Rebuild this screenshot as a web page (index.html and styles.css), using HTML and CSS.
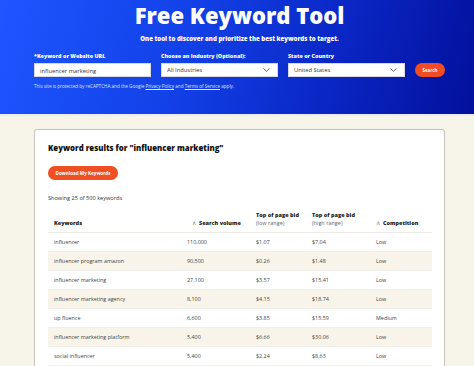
FILE: index.html
```html
<!DOCTYPE html>
<html lang="en">
<head>
  <meta charset="UTF-8" />
  <title>Free Keyword Tool</title>
  <link rel="stylesheet" href="styles.css">
</head>
<body>
  <header class="hero">
    <h1>Free Keyword Tool</h1>
    <p class="tagline">One tool to discover and prioritize the best keywords to target.</p>
    <div class="search-form">
      <div class="field">
        <label>*Keyword or Website URL</label>
        <div class="box">influencer marketing</div>
      </div>
      <div class="field">
        <label>Choose an Industry (Optional):</label>
        <div class="box select">All Industries
          <svg class="chev" width="7" height="4" viewBox="0 0 7 4"><path d="M0.5 0.5 L3.5 3.3 L6.5 0.5" fill="none" stroke="#555" stroke-width="0.9"/></svg>
        </div>
      </div>
      <div class="field">
        <label>State or Country</label>
        <div class="box select">United States
          <svg class="chev" width="7" height="4" viewBox="0 0 7 4"><path d="M0.5 0.5 L3.5 3.3 L6.5 0.5" fill="none" stroke="#555" stroke-width="0.9"/></svg>
        </div>
      </div>
      <button class="search-btn">Search</button>
    </div>
    <p class="disclaimer">This site is protected by reCAPTCHA and the Google <u>Privacy Policy</u> and <u>Terms of Service</u> apply.</p>
  </header>

  <main class="page">
    <section class="results">
      <h2>Keyword results for "influencer marketing"</h2>
      <button class="download-btn">Download My Keywords</button>
      <p class="count">Showing 25 of 500 keywords</p>
      <table class="kw-table">
        <thead>
          <tr>
            <th class="c-kw">Keywords</th>
            <th class="c-vol"><span class="sort indent">&#8743;</span>Search volume</th>
            <th class="c-low">Top of page bid<br><span class="sub">(low range)</span></th>
            <th class="c-high">Top of page bid<br><span class="sub">(high range)</span></th>
            <th class="c-comp"><span class="sort">&#8743;</span>Competition</th>
          </tr>
        </thead>
        <tbody>
          <tr><td>influencer</td><td>110,000</td><td>$1.07</td><td>$7.04</td><td>Low</td></tr>
          <tr><td>influencer program amazon</td><td>90,500</td><td>$0.26</td><td>$1.48</td><td>Low</td></tr>
          <tr><td>influencer marketing</td><td>27,100</td><td>$3.57</td><td>$15.41</td><td>Low</td></tr>
          <tr><td>influencer marketing agency</td><td>8,100</td><td>$4.15</td><td>$18.74</td><td>Low</td></tr>
          <tr><td>up fluence</td><td>6,600</td><td>$3.85</td><td>$15.59</td><td>Medium</td></tr>
          <tr><td>influencer marketing platform</td><td>5,400</td><td>$6.66</td><td>$30.06</td><td>Low</td></tr>
          <tr><td>social influencer</td><td>5,400</td><td>$2.24</td><td>$8.63</td><td>Low</td></tr>
        </tbody>
      </table>
    </section>
  </main>
</body>
</html>
```

FILE: styles.css
```css
html, body {
  height: 366px;
  overflow: hidden;
}
body {
  margin: 0;
  font-family: "Open Sans", Arial, sans-serif;
  background: #f7f4ea;
}
.hero {
  height: 116px;
  box-sizing: border-box;
  padding: 1px 0 0 34px;
  background: linear-gradient(105deg, #1e56ff 0%, #1240e6 40%, #0a26c4 70%, #03109c 100%);
  border-bottom: 2px solid #e9ebf5;
  color: #fff;
}
.hero h1 {
  margin: 0;
  width: 411px;
  text-align: center;
  font-size: 22px;
  line-height: 28px;
  font-weight: 800;
}
.tagline {
  margin: 5px 0 0;
  width: 411px;
  text-align: center;
  font-size: 6.1px;
  line-height: 10px;
  font-weight: 800;
}
.search-form {
  display: flex;
  align-items: flex-end;
  gap: 10px;
  width: 411px;
  margin-top: 8px;
}
.field {
  width: 117px;
  display: flex;
  flex-direction: column;
  gap: 3px;
}
.field label {
  font-size: 5.4px;
  line-height: 8px;
  font-weight: 800;
}
.box {
  height: 14px;
  background: #fff;
  color: #333;
  font-size: 5.8px;
  line-height: 14px;
  padding: 0 5px;
  box-sizing: border-box;
  border: 1px solid #d8d8e0;
}
.select {
  display: flex;
  justify-content: space-between;
  align-items: center;
}
.chev {
  margin-right: 2px;
}
.search-btn {
  width: 30px;
  height: 14px;
  padding: 0;
  border: none;
  border-radius: 7px;
  background: #f24c25;
  color: #fff;
  font-family: inherit;
  font-size: 4.4px;
  font-weight: 700;
}
.disclaimer {
  margin: 5px 0 0;
  font-size: 4.6px;
  line-height: 8px;
  color: #dfe4ff;
}
.disclaimer u {
  text-decoration-thickness: 0.5px;
}
.page {
  padding: 13px 0 0 34px;
}
.results {
  width: 411px;
  height: 260px;
  box-sizing: border-box;
  background: #fff;
  border: 1px solid #c9c6bb;
  border-radius: 3px;
  box-shadow: 0 0 1px rgba(0, 0, 0, 0.15);
  padding: 12px 12px 0 13px;
}
.results h2 {
  margin: 0;
  font-size: 7.8px;
  line-height: 12px;
  font-weight: 800;
  color: #111;
}
.download-btn {
  display: block;
  margin-top: 12px;
  width: 70px;
  height: 14px;
  padding: 0;
  border: none;
  border-radius: 7px;
  background: #f04e23;
  color: #fff;
  font-family: inherit;
  font-size: 4.6px;
  font-weight: 700;
}
.count {
  margin: 14px 0 0;
  font-size: 5.6px;
  line-height: 8px;
  color: #333;
}
.kw-table {
  margin-top: 4px;
  width: 384px;
  table-layout: fixed;
  border-collapse: collapse;
  font-size: 5.4px;
  color: #444;
}
.kw-table th {
  text-align: left;
  font-weight: 800;
  color: #222;
  font-size: 5.5px;
  line-height: 8px;
  padding: 5px 0 5px 0;
  vertical-align: bottom;
  border-bottom: 1px solid #eeece6;
}
.kw-table th.c-kw { padding-left: 6px; }
.kw-table .sub {
  font-weight: 400;
  color: #666;
}
.sort {
  color: #888;
  font-weight: 400;
  margin-right: 3px;
}
.sort.indent { margin-left: 5px; }
.c-kw { width: 133px; }
.c-vol { width: 69px; }
.c-low { width: 56px; }
.c-high { width: 64px; }
.kw-table td {
  height: 18px;
  padding: 0;
  border-bottom: 1px solid #f1efe9;
}
.kw-table td:first-child { padding-left: 6px; }
.kw-table tbody tr:nth-child(even) td {
  background: #f8f4ea;
}
```
